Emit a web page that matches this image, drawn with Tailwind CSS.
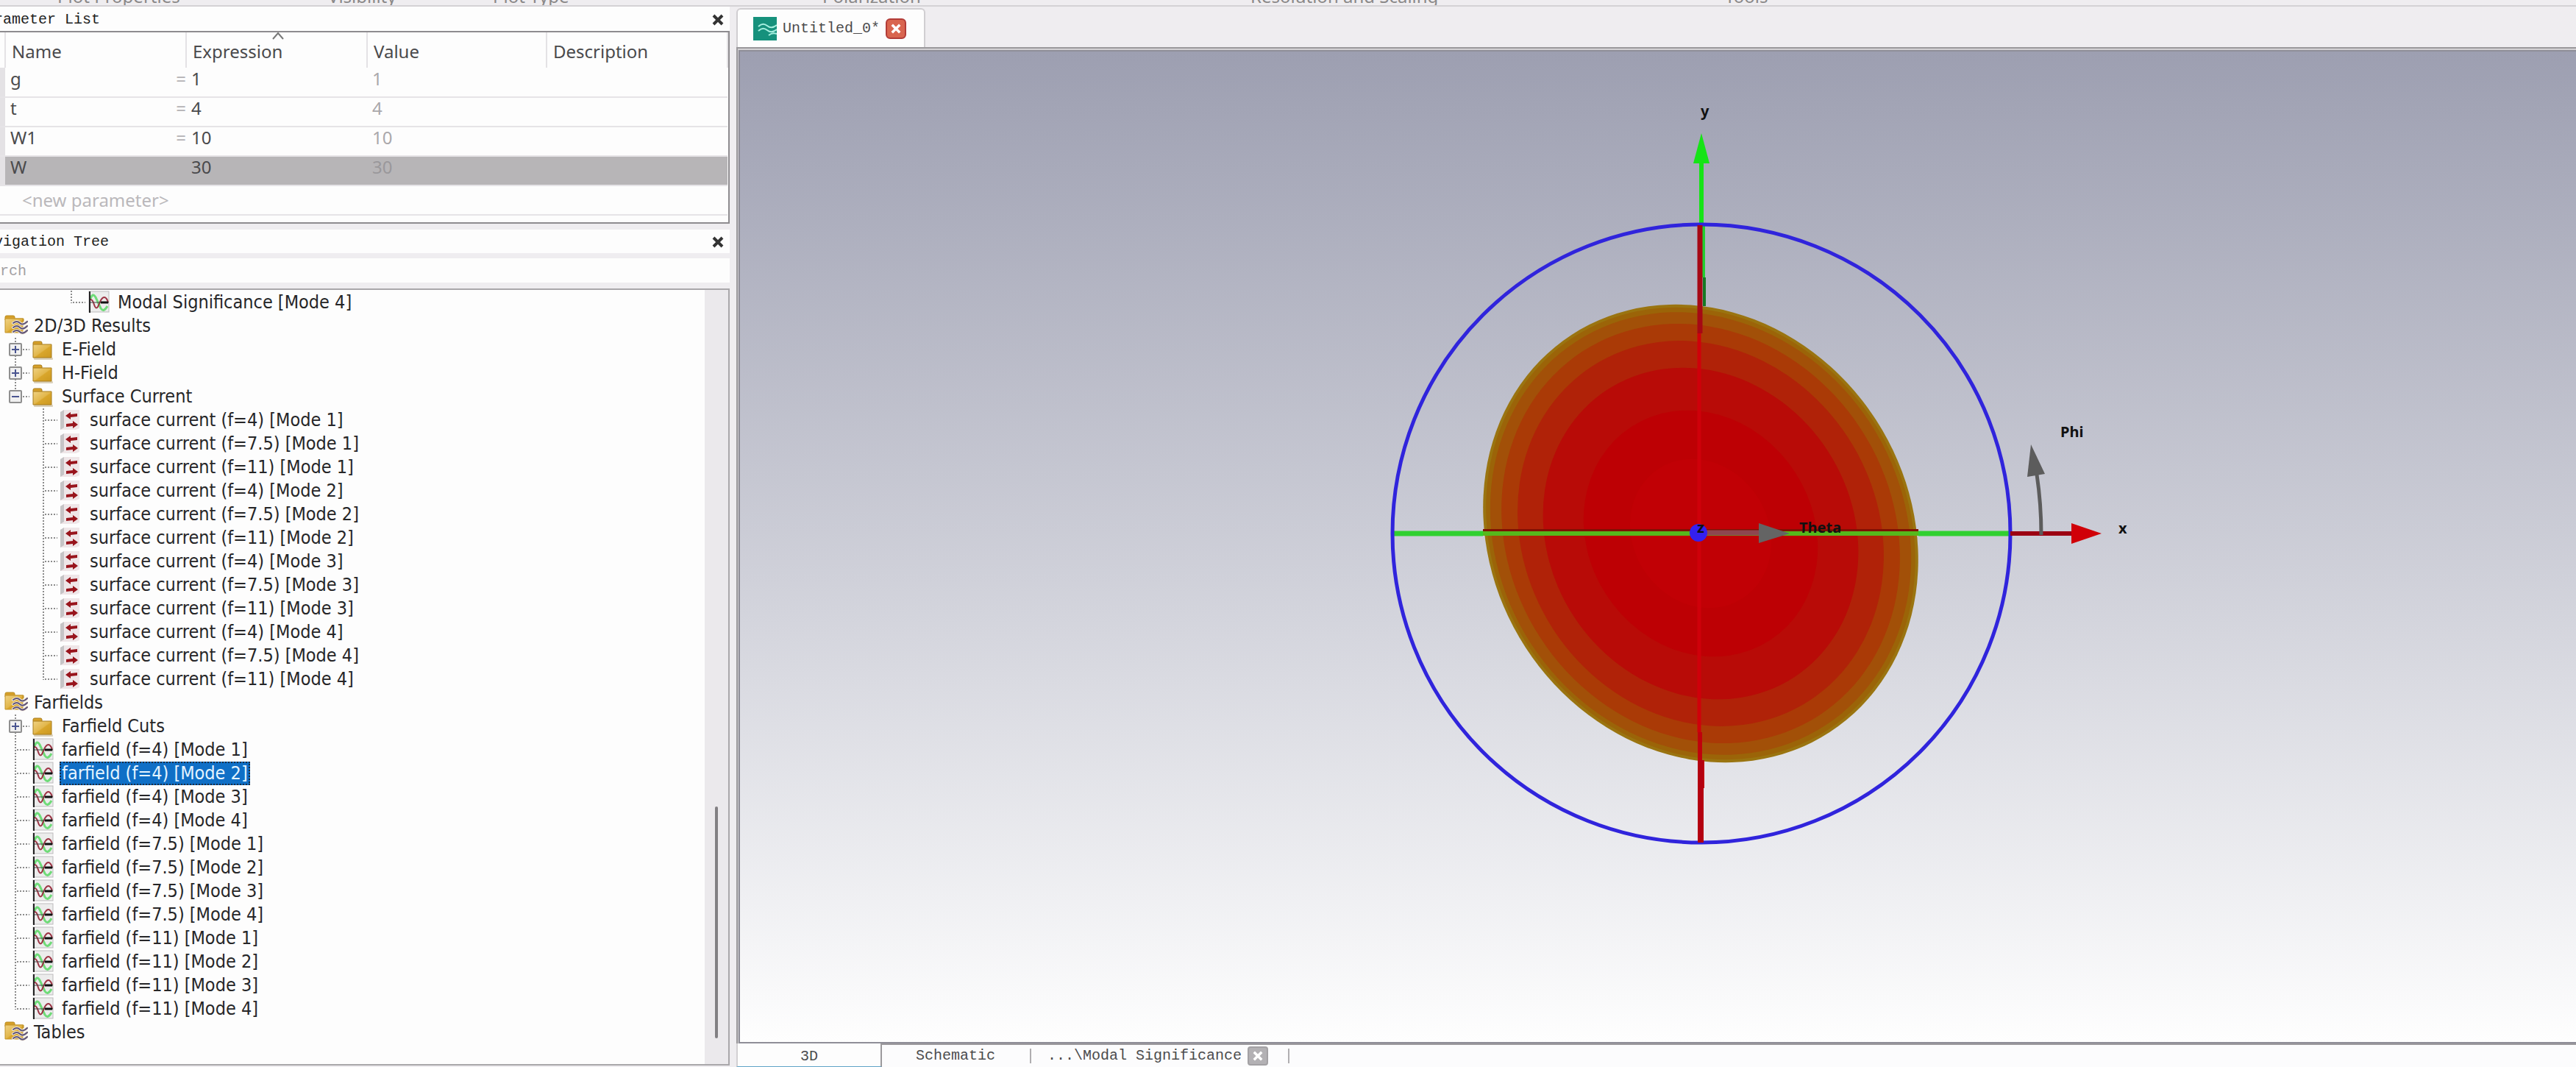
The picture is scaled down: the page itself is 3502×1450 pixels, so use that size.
<!DOCTYPE html>
<html lang="en">
<head>
<meta charset="utf-8">
<title>Untitled_0*</title>
<script src="https://cdn.jsdelivr.net/npm/@tailwindcss/browser@4"></script>
</head>
<body class="flex h-screen flex-col overflow-hidden bg-[#efedf0] font-['Liberation_Mono',monospace] text-[20px] leading-8 text-[#222]">

<svg class="absolute size-0" aria-hidden="true">
  <defs>
    <linearGradient id="gold" x1="0" y1="0" x2="1" y2="1"><stop offset="0" stop-color="#f0d283"/><stop offset=".5" stop-color="#e2b74c"/><stop offset=".55" stop-color="#d9a62c"/><stop offset="1" stop-color="#cb9820"/></linearGradient>
    <symbol id="folder" viewBox="0 0 32 32">
      <rect x="2" y="27" width="26" height="3" rx="1" fill="#b8a67c" opacity=".5"/>
      <path d="M1 9V7q0-2 2-2h8q2 0 2 2v3" fill="#d6a02a" stroke="#a87c1c"/>
      <path d="M1 9h25v18H1z" fill="url(#gold)" stroke="#a87c1c"/>
    </symbol>
    <symbol id="results" viewBox="0 0 32 32">
      <path d="M1 8V4q0-2 2-2h9q2 0 2 2v2h12v4" fill="#d6a02a" stroke="#b98a1c"/>
      <path d="M1 6h24v19H1z" fill="url(#gold)" stroke="#c49428"/>
      <g fill="none" stroke-linecap="round">
        <path d="M12 12q5-4 9 0t10-2M12 18q5-4 9 0t10-2M12 24q5-4 9 0t10-2" stroke="#f4ecdc" stroke-width="4"/>
        <path d="M12 12q5-4 9 0t10-2M12 18q5-4 9 0t10-2M12 24q5-4 9 0t10-2" stroke="#5f5478" stroke-width="2"/>
      </g>
    </symbol>
    <symbol id="plot" viewBox="0 0 32 32">
      <rect x="1" y="1" width="27" height="28" fill="#ececec" stroke="#bdbbbd"/>
      <path d="M3 11q3-9 7-2l7 15q4 6 9-3" fill="none" stroke="#6fdb78" stroke-width="3"/>
      <path d="M3 12q3 0 5 7t5 3l4-9q5-8 9 0l1 3" fill="none" stroke="#9c3444" stroke-width="2"/>
      <path d="M2 16h26" stroke="#444" stroke-width="1"/><path d="M17 16h10" stroke="#111" stroke-width="3"/>
      <path d="M2 1v29" stroke="#222" stroke-width="2"/>
    </symbol>
    <symbol id="current" viewBox="0 0 32 32">
      <path d="M0 5l5-3h21v25l-5 2H0z" fill="#efe6e8"/><path d="M0 5l5-3v24l-5 3z" fill="#c6c4c6"/>
      <path d="M7 10l7-5v3l9-1v4l-9 1v3z" fill="#98141c"/>
      <path d="M24 22l-7-5v3l-9 1v4l9-1v3z" fill="#98141c"/>
    </symbol>
    <symbol id="tee" viewBox="0 0 38 32"><path d="M19 0v32M21 16h20" fill="none" stroke="#8c8c8c" stroke-width="2" stroke-dasharray="2 2"/></symbol>
    <symbol id="ell" viewBox="0 0 38 32"><path d="M19 0v17M21 16h20" fill="none" stroke="#8c8c8c" stroke-width="2" stroke-dasharray="2 2"/></symbol>
    <symbol id="minus" viewBox="0 0 38 32"><path d="M19 0v8M29 16h10" fill="none" stroke="#8c8c8c" stroke-width="2" stroke-dasharray="2 2"/><rect x="11" y="8" width="16" height="16" rx="1" fill="#f0f0f0" stroke="#8f8f8f" stroke-width="2"/><path d="M14 16h10" stroke="#4a5590" stroke-width="2"/></symbol>
    <symbol id="plus" viewBox="0 0 38 32"><path d="M19 0v32M29 16h10" fill="none" stroke="#8c8c8c" stroke-width="2" stroke-dasharray="2 2"/><rect x="11" y="8" width="16" height="16" rx="1" fill="#f0f0f0" stroke="#8f8f8f" stroke-width="2"/><path d="M14 16h10M19 11v10" stroke="#4a5590" stroke-width="2"/></symbol>
    <symbol id="cross" viewBox="0 0 16 16"><path d="M2 2l12 12M14 2L2 14" stroke="currentColor" stroke-width="4"/></symbol>
  </defs>
</svg>

<header class="relative h-[9px] shrink-0 overflow-hidden border-b-2 border-[#d4d2d5] font-['Noto_Sans',sans-serif] text-2xl leading-6 text-[#8a8888]">
  <span class="absolute bottom-0 left-[78px]">Plot Properties</span>
  <span class="absolute bottom-0 left-[446px]">Visibility</span>
  <span class="absolute bottom-0 left-[670px]">Plot Type</span>
  <span class="absolute bottom-0 left-[1118px]">Polarization</span>
  <span class="absolute bottom-0 left-[1700px]">Resolution and Scaling</span>
  <span class="absolute bottom-0 left-[2345px]">Tools</span>
</header>

<div class="flex min-h-0 flex-1">
  <aside class="flex w-[992px] shrink-0 flex-col pb-[2px]">
    <section class="flex flex-col">
      <div class="flex h-[33px] items-center justify-between overflow-hidden bg-[#fdfdfd] pt-[2px] pr-2">
        <h2 class="-ml-8">Parameter List</h2>
        <button type="button" aria-label="Close Parameter List" class="text-[#333]"><svg class="size-4"><use href="#cross"/></svg></button>
      </div>
      <div class="h-[262px] border-y-2 border-r-2 border-[#8e8c8f] bg-[#fdfdfd]">
        <table class="w-full table-fixed border-collapse font-['Noto_Sans',sans-serif] text-2xl text-[#4a4a4c]">
          <colgroup><col class="w-[7px]"><col class="w-[246px]"><col class="w-[246px]"><col class="w-[244px]"><col></colgroup>
          <thead>
            <tr class="h-12 text-left [&>th]:border-r-2 [&>th]:border-[#e4e2e5] [&>th]:pt-1 [&>th]:pl-2 [&>th]:font-normal">
              <th aria-label="Row"></th><th>Name</th>
              <th class="relative">Expression<svg class="absolute top-0 left-[116px] h-[10px] w-4" viewBox="0 0 16 10"><path d="M1 9l7-8 7 8" fill="none" stroke="#777" stroke-width="2"/></svg></th>
              <th>Value</th><th>Description</th>
            </tr>
          </thead>
          <tbody class="[&>tr]:h-10 [&>tr]:border-b-2 [&>tr]:border-[#e6e4e7] [&_td]:pb-[10px] [&_td]:pl-[7px] [&_td]:leading-7">
            <tr><td class="bg-[#e4e2e5]"></td><td><div class="flex justify-between"><span>g</span><span class="text-[#b4b2b5]">=</span></div></td><td>1</td><td class="text-[#aaa8ab]">1</td><td></td></tr>
            <tr><td class="bg-[#e4e2e5]"></td><td><div class="flex justify-between"><span>t</span><span class="text-[#b4b2b5]">=</span></div></td><td>4</td><td class="text-[#aaa8ab]">4</td><td></td></tr>
            <tr><td class="bg-[#e4e2e5]"></td><td><div class="flex justify-between"><span>W1</span><span class="text-[#b4b2b5]">=</span></div></td><td>10</td><td class="text-[#aaa8ab]">10</td><td></td></tr>
            <tr class="bg-[#b7b5b7]"><td class="bg-[#e4e2e5]"></td><td>W</td><td>30</td><td class="text-[#9a989b]">30</td><td></td></tr>
            <tr><td></td><td class="pb-0! text-[#bab8bb]"><span class="pl-4">&lt;new parameter&gt;</span></td><td></td><td></td><td></td></tr>
          </tbody>
        </table>
      </div>
    </section>

    <section class="mt-2 flex min-h-0 flex-1 flex-col">
      <div class="flex h-8 shrink-0 items-center justify-between overflow-hidden bg-[#fdfdfd] pt-[2px] pr-2">
        <h2 class="-ml-8">Navigation Tree</h2>
        <button type="button" aria-label="Close Navigation Tree" class="text-[#333]"><svg class="size-4"><use href="#cross"/></svg></button>
      </div>
      <div class="mt-[7px] flex h-[33px] shrink-0 overflow-hidden bg-[#fdfdfd] pt-[2px]">
        <input type="text" aria-label="Search" placeholder="Search" class="-ml-9 w-full bg-transparent outline-none placeholder:text-[#a3a1a4]">
      </div>
      <div class="mt-2 flex min-h-0 flex-1 border-y-2 border-r-2 border-[#a9a7aa] bg-[#fdfdfd]">
        <ul class="min-w-0 flex-1 overflow-hidden pt-px font-['DejaVu_Sans_Condensed','DejaVu_Sans',sans-serif] text-[25px] leading-8 whitespace-nowrap text-[#262628] [&>li]:flex [&>li]:h-8 [&>li]:pl-[2px] [&_.b]:h-8 [&_.b]:w-[38px] [&_.b]:shrink-0 [&_.b]:overflow-visible [&_.i]:mr-2 [&_.i]:ml-1 [&_.i]:size-8 [&_.i]:shrink-0">
          <li><svg class="b"></svg><svg class="b"></svg><svg class="b"><use href="#ell"/></svg><svg class="i"><use href="#plot"/></svg>Modal Significance [Mode 4]</li>
          <li><svg class="i"><use href="#results"/></svg>2D/3D Results</li>
          <li><svg class="b"><use href="#plus"/></svg><svg class="i"><use href="#folder"/></svg>E-Field</li>
          <li><svg class="b"><use href="#plus"/></svg><svg class="i"><use href="#folder"/></svg>H-Field</li>
          <li><svg class="b"><use href="#minus"/></svg><svg class="i"><use href="#folder"/></svg>Surface Current</li>
          <li><svg class="b"></svg><svg class="b"><use href="#tee"/></svg><svg class="i"><use href="#current"/></svg>surface current (f=4) [Mode 1]</li>
          <li><svg class="b"></svg><svg class="b"><use href="#tee"/></svg><svg class="i"><use href="#current"/></svg>surface current (f=7.5) [Mode 1]</li>
          <li><svg class="b"></svg><svg class="b"><use href="#tee"/></svg><svg class="i"><use href="#current"/></svg>surface current (f=11) [Mode 1]</li>
          <li><svg class="b"></svg><svg class="b"><use href="#tee"/></svg><svg class="i"><use href="#current"/></svg>surface current (f=4) [Mode 2]</li>
          <li><svg class="b"></svg><svg class="b"><use href="#tee"/></svg><svg class="i"><use href="#current"/></svg>surface current (f=7.5) [Mode 2]</li>
          <li><svg class="b"></svg><svg class="b"><use href="#tee"/></svg><svg class="i"><use href="#current"/></svg>surface current (f=11) [Mode 2]</li>
          <li><svg class="b"></svg><svg class="b"><use href="#tee"/></svg><svg class="i"><use href="#current"/></svg>surface current (f=4) [Mode 3]</li>
          <li><svg class="b"></svg><svg class="b"><use href="#tee"/></svg><svg class="i"><use href="#current"/></svg>surface current (f=7.5) [Mode 3]</li>
          <li><svg class="b"></svg><svg class="b"><use href="#tee"/></svg><svg class="i"><use href="#current"/></svg>surface current (f=11) [Mode 3]</li>
          <li><svg class="b"></svg><svg class="b"><use href="#tee"/></svg><svg class="i"><use href="#current"/></svg>surface current (f=4) [Mode 4]</li>
          <li><svg class="b"></svg><svg class="b"><use href="#tee"/></svg><svg class="i"><use href="#current"/></svg>surface current (f=7.5) [Mode 4]</li>
          <li><svg class="b"></svg><svg class="b"><use href="#ell"/></svg><svg class="i"><use href="#current"/></svg>surface current (f=11) [Mode 4]</li>
          <li><svg class="i"><use href="#results"/></svg>Farfields</li>
          <li><svg class="b"><use href="#plus"/></svg><svg class="i"><use href="#folder"/></svg>Farfield Cuts</li>
          <li><svg class="b"><use href="#tee"/></svg><svg class="i"><use href="#plot"/></svg>farfield (f=4) [Mode 1]</li>
          <li><svg class="b"><use href="#tee"/></svg><svg class="i"><use href="#plot"/></svg><span class="-ml-[3px] bg-[#0f6fc6] px-[3px] text-[#e4f4ff] outline-2 -outline-offset-2 outline-[#1c2c40] outline-dotted">farfield (f=4) [Mode 2]</span></li>
          <li><svg class="b"><use href="#tee"/></svg><svg class="i"><use href="#plot"/></svg>farfield (f=4) [Mode 3]</li>
          <li><svg class="b"><use href="#tee"/></svg><svg class="i"><use href="#plot"/></svg>farfield (f=4) [Mode 4]</li>
          <li><svg class="b"><use href="#tee"/></svg><svg class="i"><use href="#plot"/></svg>farfield (f=7.5) [Mode 1]</li>
          <li><svg class="b"><use href="#tee"/></svg><svg class="i"><use href="#plot"/></svg>farfield (f=7.5) [Mode 2]</li>
          <li><svg class="b"><use href="#tee"/></svg><svg class="i"><use href="#plot"/></svg>farfield (f=7.5) [Mode 3]</li>
          <li><svg class="b"><use href="#tee"/></svg><svg class="i"><use href="#plot"/></svg>farfield (f=7.5) [Mode 4]</li>
          <li><svg class="b"><use href="#tee"/></svg><svg class="i"><use href="#plot"/></svg>farfield (f=11) [Mode 1]</li>
          <li><svg class="b"><use href="#tee"/></svg><svg class="i"><use href="#plot"/></svg>farfield (f=11) [Mode 2]</li>
          <li><svg class="b"><use href="#tee"/></svg><svg class="i"><use href="#plot"/></svg>farfield (f=11) [Mode 3]</li>
          <li><svg class="b"><use href="#ell"/></svg><svg class="i"><use href="#plot"/></svg>farfield (f=11) [Mode 4]</li>
          <li><svg class="i"><use href="#results"/></svg>Tables</li>
        </ul>
        <div class="flex w-8 shrink-0 flex-col items-center justify-end bg-[#ebe9ec] pb-[35px]"><div class="h-[31%] w-1 rounded bg-[#828083]"></div></div>
      </div>
    </section>
  </aside>

  <main class="ml-[9px] flex min-w-0 flex-1 flex-col">
    <div class="flex h-[55px] shrink-0 items-end">
      <div class="flex h-[53px] items-center rounded-t-md border-2 border-b-0 border-[#d0ced1] bg-[#fdfdfd] pr-6 pl-[21px] text-[#4c4c4e]">
        <svg class="mr-2 size-8" viewBox="0 0 32 32"><path d="M0 0h32v32H0z" fill="#16917c"/><g fill="none" stroke="#a5efdf" stroke-width="2"><path d="M7 13q6-6 12-1t13-1M7 19q6-6 12-1t13-1M21 25q5-4 11-2"/></g></svg>
        Untitled_0*
        <button type="button" aria-label="Close Untitled_0" class="ml-2 flex size-7 items-center justify-center rounded-md border-2 border-[#b23c38] bg-[#d9654f] text-white"><svg class="size-[14px]"><use href="#cross"/></svg></button>
      </div>
    </div>

    <div class="min-h-0 flex-1 border-t-2 border-l-2 border-[#9b999c] bg-[#d2d0d3] pt-[2px] pl-px">
      <svg class="block h-full w-full border-y-2 border-l-2 border-[#8f8e98] bg-linear-to-b from-[#9d9fb1] to-[#fefefe]" viewBox="1006 70 2496 1346" role="img" aria-label="Farfield plot">
        <g transform="translate(2312 725) rotate(57)">
          <ellipse rx="322" ry="284" fill="#9a7410"/>
          <ellipse rx="318" ry="280" fill="#9b6408"/>
          <ellipse rx="311" ry="275" fill="#a25008"/>
          <ellipse rx="295" ry="260" fill="#aa3a06"/>
          <ellipse rx="271" ry="239" fill="#b02208"/>
          <ellipse rx="233" ry="206" fill="#b80b07"/>
          <ellipse rx="173" ry="153" fill="#bd0004"/>
          <ellipse rx="105" ry="92" fill="#c10005"/>
        </g>
        <path d="M2313 215v90" stroke="#16e416" stroke-width="6"/>
        <path d="M2313 181l11 41h-22z" fill="#16e416"/>
        <path d="M2316 305v72" stroke="#22d030" stroke-width="4"/>
        <path d="M2317 377v39" stroke="#167a24" stroke-width="4"/>
        <path d="M2310 453v542" stroke="#cf000a" stroke-width="5"/>
        <path d="M2016 721h592" stroke="#801004" stroke-width="4"/>
        <path d="M1893 725h123M2608 725h125" stroke="#30d030" stroke-width="7"/>
        <path d="M2016 725h592" stroke="#56b81c" stroke-width="6"/>
        <circle cx="2313" cy="725" r="420" fill="none" stroke="#3024dc" stroke-width="5"/>
        <path d="M2311 306v147" stroke="#a60814" stroke-width="7"/>
        <path d="M2311 995v38" stroke="#c0000c" stroke-width="6"/>
        <path d="M2314 1033v38" stroke="#c8000e" stroke-width="6"/>
        <path d="M2312 1033v112" stroke="#b40010" stroke-width="8"/>
        <path d="M2733 725h84" stroke="#9c0012" stroke-width="6"/>
        <path d="M2816 711l41 14-41 14z" fill="#d00008"/>
        <path d="M2775 727q0-42-6-82" fill="none" stroke="#5c5c5c" stroke-width="5"/>
        <path d="M2761 604l19 40-24 4z" fill="#5c5c5c"/>
        <path d="M2309 724h84" stroke="#8e4650" stroke-width="7"/>
        <path d="M2391 711l42 14-42 13z" fill="#646464"/>
        <circle cx="2309" cy="724" r="12" fill="#3420f0"/>
        <g class="font-['Noto_Sans',sans-serif] text-[20px] font-bold" fill="#111">
          <text x="2312" y="158">y</text>
          <text x="2801" y="594">Phi</text>
          <text x="2880" y="725">x</text>
          <text x="2446" y="724">Theta</text>
          <text x="2307" y="724">z</text>
        </g>
      </svg>
    </div>

    <nav class="flex h-8 shrink-0 bg-[#fcfcfd] text-[#4c4c4e]">
      <button type="button" class="h-8 w-[198px] border-r-2 border-b border-l-2 border-r-[#9b999c] border-b-[#5fa3c6] border-l-[#d2d0d3] bg-[#fdfdfd] pt-[2px]">3D</button>
      <div class="flex flex-1 items-center border-t-2 border-[#9b999c] pl-[46px]">
        <button type="button">Schematic</button>
        <span class="mr-[22px] ml-[47px] h-5 w-[2px] bg-[#b0aeb1]"></span>
        <button type="button">...\Modal Significance</button>
        <button type="button" aria-label="Close Modal Significance" class="ml-2 flex h-[26px] w-7 items-center justify-center rounded-sm border-2 border-[#a3a1a4] bg-[#b3b1b4] text-white"><svg class="size-[14px]"><use href="#cross"/></svg></button>
        <span class="ml-[27px] h-5 w-[2px] bg-[#b0aeb1]"></span>
      </div>
    </nav>
  </main>
</div>
</body>
</html>
